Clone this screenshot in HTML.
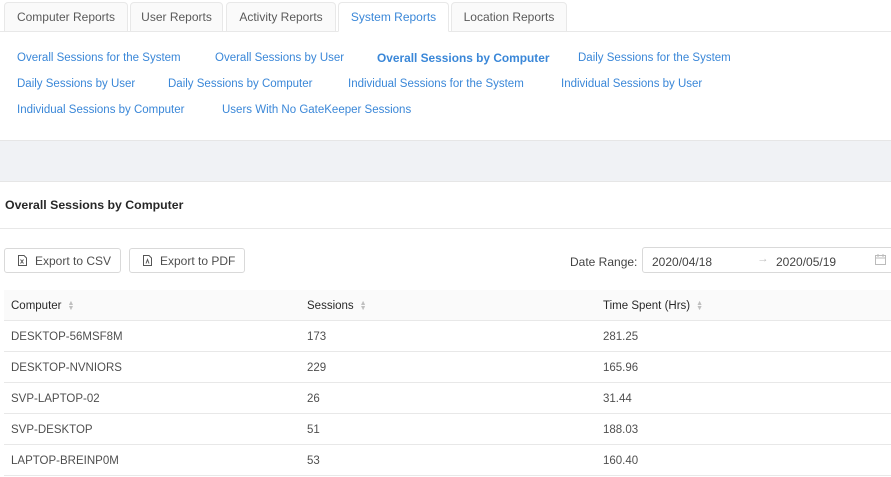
<!DOCTYPE html>
<html><head><style>
*{box-sizing:border-box;margin:0;padding:0}
body{width:891px;height:469px;overflow:hidden;background:#fff;font-family:"Liberation Sans",sans-serif;font-size:11.5px;color:rgba(0,0,0,.65);position:relative}
.a{position:absolute;white-space:nowrap}
.tab{position:absolute;top:2px;height:30px;background:#fafafa;border:1px solid #e8e8e8;border-radius:4px 4px 0 0;line-height:29px;text-align:center;color:rgba(0,0,0,.65);font-size:12px}
.tab.on{background:#fff;border-bottom-color:#fff;color:#3a87d8}
.lk{position:absolute;color:#3a87d8;font-size:11.5px;white-space:nowrap}
.btn{position:absolute;top:248px;height:25px;border:1px solid #d9d9d9;border-radius:3px;line-height:24px;padding-left:30px;color:rgba(0,0,0,.7);font-size:12px}
.btn svg{position:absolute;left:13px;top:6px}
.row{position:absolute;left:4px;width:887px;height:31px;border-bottom:1px solid #e8e8e8;line-height:32px;color:rgba(0,0,0,.7)}
.row span{position:absolute}
.srt{display:inline-block;margin-left:6px;vertical-align:middle;color:#bfbfbf;font-size:7px;line-height:5px;font-style:normal}
</style></head><body>
<div class="a" style="left:0;top:31px;width:891px;border-top:1px solid #e8e8e8"></div>
<div class="tab" style="left:4px;width:124px">Computer Reports</div>
<div class="tab" style="left:130px;width:93px">User Reports</div>
<div class="tab" style="left:226px;width:110px">Activity Reports</div>
<div class="tab on" style="left:338px;width:111px">System Reports</div>
<div class="tab" style="left:451px;width:116px">Location Reports</div>

<div class="lk" style="left:17px;top:52px">Overall Sessions for the System</div>
<div class="lk" style="left:215px;top:52px">Overall Sessions by User</div>
<div class="lk" style="left:377px;top:51px;font-weight:bold;font-size:11.9px">Overall Sessions by Computer</div>
<div class="lk" style="left:578px;top:52px">Daily Sessions for the System</div>
<div class="lk" style="left:17px;top:78px">Daily Sessions by User</div>
<div class="lk" style="left:168px;top:78px">Daily Sessions by Computer</div>
<div class="lk" style="left:348px;top:78px">Individual Sessions for the System</div>
<div class="lk" style="left:561px;top:78px">Individual Sessions by User</div>
<div class="lk" style="left:17px;top:104px">Individual Sessions by Computer</div>
<div class="lk" style="left:222px;top:104px">Users With No GateKeeper Sessions</div>

<div class="a" style="left:0;top:140px;width:891px;height:42px;background:#f0f2f5;border-top:1px solid #e6e6e6;border-bottom:1px solid #e6e6e6"></div>
<div class="a" style="left:5px;top:198px;font-weight:bold;font-size:12.3px;color:rgba(0,0,0,.85)">Overall Sessions by Computer</div>
<div class="a" style="left:0;top:228px;width:891px;border-top:1px solid #e8e8e8"></div>

<div class="btn" style="left:4px;width:117px"><svg width="9" height="11" viewBox="0 0 9 11"><path d="M.5.5h5.5l2.5 2.5v7.5h-8z" fill="none" stroke="#555"/><path d="M2.5 4.5l3 4M5.5 4.5l-3 4" stroke="#555"/></svg>Export to CSV</div>
<div class="btn" style="left:129px;width:116px"><svg width="9" height="11" viewBox="0 0 9 11"><path d="M.5.5h5.5l2.5 2.5v7.5h-8z" fill="none" stroke="#555"/><path d="M3 8.5l1.5-4 1.5 4" fill="none" stroke="#555"/></svg>Export to PDF</div>
<div class="a" style="left:570px;top:255px;font-size:12px;color:rgba(0,0,0,.75)">Date Range:</div>
<div class="a" style="left:642px;top:247px;width:260px;height:26px;border:1px solid #d9d9d9;border-radius:3px"></div>
<div class="a" style="left:652px;top:255px;font-size:12px;color:rgba(0,0,0,.75)">2020/04/18</div>
<div class="a" style="left:757px;top:253px;color:#bbb">→</div>
<div class="a" style="left:776px;top:255px;font-size:12px;color:rgba(0,0,0,.75)">2020/05/19</div>
<svg class="a" style="left:875px;top:254px" width="11" height="11" viewBox="0 0 11 11"><rect x=".5" y="1.5" width="10" height="9" fill="none" stroke="#bbb"/><path d="M.5 4h10M3 0v3M8 0v3" stroke="#bbb"/></svg>

<div class="row" style="top:290px;height:31px;background:#fafafa;color:rgba(0,0,0,.85)">
<span style="left:7px">Computer<i class="srt">▲<br>▼</i></span><span style="left:303px">Sessions<i class="srt">▲<br>▼</i></span><span style="left:599px">Time Spent (Hrs)<i class="srt">▲<br>▼</i></span></div>
<div class="row" style="top:321px"><span style="left:7px">DESKTOP-56MSF8M</span><span style="left:303px">173</span><span style="left:599px">281.25</span></div>
<div class="row" style="top:352px"><span style="left:7px">DESKTOP-NVNIORS</span><span style="left:303px">229</span><span style="left:599px">165.96</span></div>
<div class="row" style="top:383px"><span style="left:7px">SVP-LAPTOP-02</span><span style="left:303px">26</span><span style="left:599px">31.44</span></div>
<div class="row" style="top:414px"><span style="left:7px">SVP-DESKTOP</span><span style="left:303px">51</span><span style="left:599px">188.03</span></div>
<div class="row" style="top:445px"><span style="left:7px">LAPTOP-BREINP0M</span><span style="left:303px">53</span><span style="left:599px">160.40</span></div>
</body></html>
